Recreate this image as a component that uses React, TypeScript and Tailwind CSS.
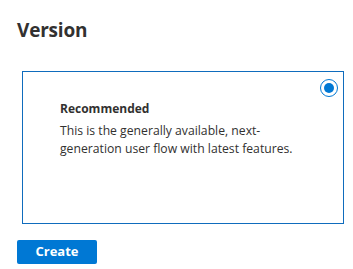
export default function App() {
  return (
    <div
      className="w-[353px] h-[269px] bg-white pl-[17px] pt-[17px] text-[#323130]"
      style={{ fontFamily: '"Open Sans", "Liberation Sans", sans-serif' }}
    >
      <h2 className="text-[19px] leading-[26px] font-bold tracking-[-0.2px]">Version</h2>

      <div className="relative ml-[5px] mt-[28px] w-[322px] h-[153px] border border-[#0f6cbd] pl-[37px] pt-[28px]">
        <span className="absolute right-[5px] top-[7px] w-[18px] h-[18px] rounded-full border-[1.5px] border-[#0078d4] flex items-center justify-center">
          <span className="w-[10px] h-[10px] rounded-full bg-[#0078d4]" />
        </span>
        <div className="text-[12px] leading-[18px] font-bold">Recommended</div>
        <p className="mt-[4px] text-[12.2px] leading-[18px] w-[245px]">
          This is the generally available, next-generation user flow with latest features.
        </p>
      </div>

      <button className="mt-[16px] w-[80px] h-[24px] rounded-[2px] bg-[#0078d4] text-white text-[13px] font-bold">
        Create
      </button>
    </div>
  );
}
